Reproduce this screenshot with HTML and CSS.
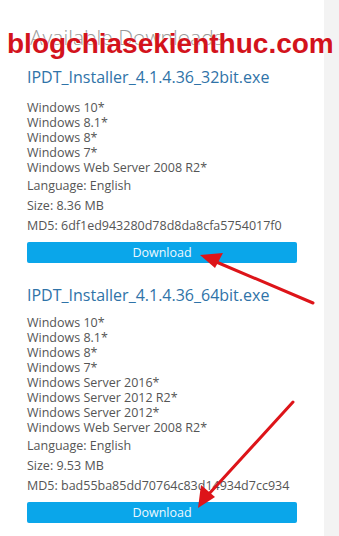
FILE: index.html
```html
<!DOCTYPE html>
<html lang="en">
<head>
    <meta charset="UTF-8">
    <meta name="viewport" content="width=device-width, initial-scale=1.0">
    <title>Available Downloads</title>
    <link rel="stylesheet" href="styles.css">
</head>
<body>
    <div class="page">
        <div class="main">
            <h2 class="heading">Available Downloads</h2>

            <div class="file first">
                <a href="#" class="file-name">IPDT_Installer_4.1.4.36_32bit.exe</a>
                <ul class="os-list">
                    <li>Windows 10*</li>
                    <li>Windows 8.1*</li>
                    <li>Windows 8*</li>
                    <li>Windows 7*</li>
                    <li>Windows Web Server 2008 R2*</li>
                </ul>
                <p class="meta">Language: English</p>
                <p class="meta">Size: 8.36 MB</p>
                <p class="meta">MD5: 6df1ed943280d78d8da8cfa5754017f0</p>
                <button class="download-button">Download</button>
            </div>

            <div class="file">
                <a href="#" class="file-name">IPDT_Installer_4.1.4.36_64bit.exe</a>
                <ul class="os-list">
                    <li>Windows 10*</li>
                    <li>Windows 8.1*</li>
                    <li>Windows 8*</li>
                    <li>Windows 7*</li>
                    <li>Windows Server 2016*</li>
                    <li>Windows Server 2012 R2*</li>
                    <li>Windows Server 2012*</li>
                    <li>Windows Web Server 2008 R2*</li>
                </ul>
                <p class="meta">Language: English</p>
                <p class="meta">Size: 9.53 MB</p>
                <p class="meta">MD5: bad55ba85dd70764c83d14934d7cc934</p>
                <button class="download-button">Download</button>
            </div>
        </div>
        <div class="aside"></div>
    </div>

    <div class="watermark">blogchiasekienthuc.com</div>

    <!-- red arrows pointing at the buttons -->
    <svg class="arrows" width="339" height="536" viewBox="0 0 339 536">
        <g stroke="#dd1419" stroke-width="3" stroke-linecap="round" fill="none">
            <line x1="313" y1="303" x2="214" y2="261"/>
            <line x1="293" y1="402" x2="208" y2="495"/>
        </g>
        <g fill="#dd1419">
            <polygon points="200,255 223,253 215,268"/>
            <polygon points="198,508 201,485 215,497"/>
        </g>
    </svg>
</body>
</html>
```

FILE: styles.css
```css
body {
    margin: 0;
    font-family: 'Open Sans', 'Noto Sans', sans-serif;
    color: #555;
    background-color: #fff;
}

.page {
    display: flex;
    height: 536px;
    overflow: hidden;
}

.main {
    width: 297px;
    padding-left: 27px;
    background-color: #fff;
}

.aside {
    flex: 1;
    background-color: #f3f3f3;
}

.heading {
    margin: 0 0 15px;
    padding: 22px 0 0 3px;
    font-size: 21px;
    font-weight: 300;
    line-height: 30px;
    color: #9a9a9a;
}

.file-name {
    display: block;
    font-size: 16px;
    line-height: 20px;
    color: #2f73a8;
    text-decoration: none;
    margin-bottom: 10px;
}

.file.first .file-name {
    margin-bottom: 13px;
}

.os-list {
    list-style: none;
    margin: 0 0 1px;
    padding: 0;
}

.os-list li {
    font-size: 12.5px;
    line-height: 15px;
}

.meta {
    margin: 0;
    font-size: 12.5px;
    line-height: 20px;
}

.download-button {
    display: block;
    width: 270px;
    height: 21px;
    margin: 6px 0 22px;
    padding: 0;
    border: none;
    border-radius: 2px;
    background-color: #0aa6ea;
    color: #eef9ff;
    font-family: 'Open Sans', sans-serif;
    font-size: 12.5px;
    cursor: pointer;
}

.watermark {
    position: absolute;
    top: 28px;
    left: 7px;
    font-family: 'Liberation Sans', Arial, sans-serif;
    font-weight: bold;
    font-size: 28px;
    line-height: 32px;
    color: #d3131c;
    text-shadow: 0 0 2px #fff;
}

.arrows {
    position: absolute;
    top: 0;
    left: 0;
}
```
